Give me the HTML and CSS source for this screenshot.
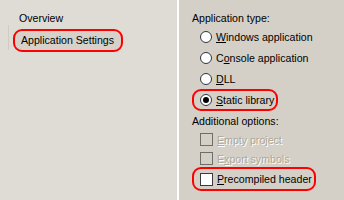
FILE: index.html
```html
<!DOCTYPE html>
<html>
<head>
<meta charset="utf-8">
<link rel="stylesheet" href="styles.css">
</head>
<body>
<div class="window">
  <div class="nav">
    <div class="nav-item">Overview</div>
    <div class="nav-tree">
      <div class="nav-item selected marked">Application Settings</div>
    </div>
  </div>
  <div class="divider"></div>
  <div class="panel">
    <div class="group-label">Application type:</div>
    <div class="opt"><span class="radio"></span><span><u>W</u>indows application</span></div>
    <div class="opt"><span class="radio"></span><span>C<u>o</u>nsole application</span></div>
    <div class="opt"><span class="radio"></span><span><u>D</u>LL</span></div>
    <div class="opt marked"><span class="radio checked"></span><span><u>S</u>tatic library</span></div>
    <div class="group-label second">Additional options:</div>
    <div class="opt check disabled"><span class="box"></span><span><u>E</u>mpty project</span></div>
    <div class="opt check disabled"><span class="box"></span><span>E<u>x</u>port symbols</span></div>
    <div class="opt check marked"><span class="box"></span><span><u>P</u>recompiled header</span></div>
  </div>
</div>
</body>
</html>
```
FILE: styles.css
```css
html, body {
  margin: 0;
  padding: 0;
}
body {
  width: 344px;
  height: 200px;
  overflow: hidden;
  font-family: "Liberation Sans", Arial, sans-serif;
  font-size: 10.6px;
  color: #000;
}
.window {
  display: flex;
  width: 344px;
  height: 200px;
}
.nav {
  width: 177px;
  background: #dfdcd6;
  padding-top: 9px;
  box-sizing: border-box;
}
.nav-item {
  height: 19px;
  line-height: 19px;
  padding-left: 19px;
  white-space: nowrap;
}
.nav-tree {
  margin-left: 8px;
  padding-left: 7px;
  border-left: 1px solid #cfccc5;
  margin-top: -3px;
  padding-top: 6px;
}
.nav-item.selected {
  display: inline-block;
  padding: 0 7px 0 6px;
  margin-left: -1px;
  background: #d6d2ca;
}
.divider {
  width: 2px;
  background: #ffffff;
}
.panel {
  flex: 1;
  background: #d4d0c8;
  padding: 11px 0 0 13px;
  box-sizing: border-box;
}
.group-label {
  height: 14px;
  line-height: 14px;
  margin-bottom: 1px;
}
.group-label.second {
  margin-top: 5px;
  margin-bottom: 2px;
}
.opt {
  display: flex;
  align-items: center;
  width: max-content;
  height: 21px;
  padding: 0 2px 0 8px;
  box-sizing: border-box;
}
.opt.check {
  height: 19px;
}
.radio {
  width: 12px;
  height: 12px;
  border: 1px solid #2e3440;
  border-radius: 50%;
  background: #ffffff;
  box-sizing: border-box;
  margin-right: 4px;
  display: flex;
  align-items: center;
  justify-content: center;
  flex: none;
}
.radio.checked::after {
  content: "";
  width: 6px;
  height: 6px;
  border-radius: 50%;
  background: #000;
}
.box {
  width: 13px;
  height: 13px;
  border: 1px solid #3b3b3b;
  background: #ffffff;
  box-sizing: border-box;
  margin-right: 4px;
  flex: none;
}
.disabled {
  color: #aca899;
  text-shadow: 1px 1px 0 #ffffff;
}
.disabled .box {
  background: transparent;
  border-color: #6f6d68;
}
.marked {
  outline: 2px solid #ff0000;
  outline-offset: 0;
  border-radius: 7px;
}
.opt.marked {
  padding-left: 6px;
  margin-left: 2px;
  height: 18px;
  margin-top: 2px;
  margin-bottom: 1px;
}
.opt.check.marked {
  height: 20px;
  margin-top: 1px;
}
```
